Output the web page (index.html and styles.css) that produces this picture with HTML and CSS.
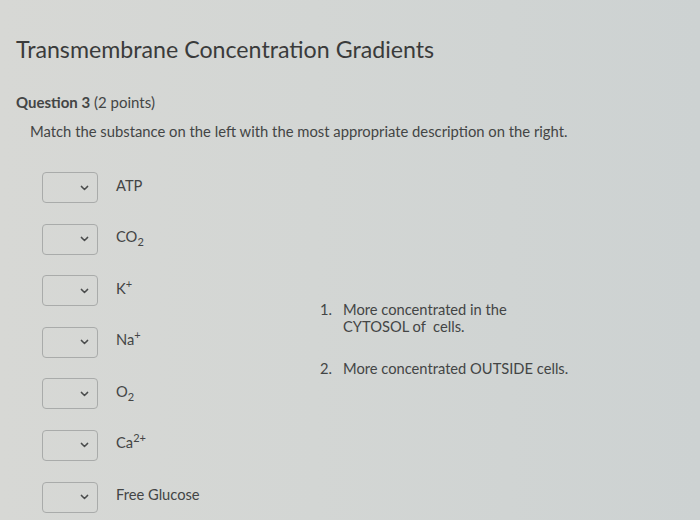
FILE: index.html
```html
<!DOCTYPE html>
<html lang="en">
<head>
<meta charset="utf-8">
<title>Transmembrane Concentration Gradients</title>
<link rel="stylesheet" href="styles.css">
</head>
<body>
<main class="page">
  <h1 class="title">Transmembrane Concentration Gradients</h1>
  <h2 class="q-head"><strong>Question 3</strong> (2 points)</h2>
  <p class="prompt">Match the substance on the left with the most appropriate description on the right.</p>

  <section class="match">
    <div class="choices">
      <div class="row">
        <button class="select" type="button" aria-label="Select answer"><svg class="chev" viewBox="0 0 10 6"><path d="M1.5 1.2 L5 4.6 L8.5 1.2"/></svg></button>
        <span class="label">ATP</span>
      </div>
      <div class="row">
        <button class="select" type="button" aria-label="Select answer"><svg class="chev" viewBox="0 0 10 6"><path d="M1.5 1.2 L5 4.6 L8.5 1.2"/></svg></button>
        <span class="label">CO<sub>2</sub></span>
      </div>
      <div class="row">
        <button class="select" type="button" aria-label="Select answer"><svg class="chev" viewBox="0 0 10 6"><path d="M1.5 1.2 L5 4.6 L8.5 1.2"/></svg></button>
        <span class="label">K<sup>+</sup></span>
      </div>
      <div class="row">
        <button class="select" type="button" aria-label="Select answer"><svg class="chev" viewBox="0 0 10 6"><path d="M1.5 1.2 L5 4.6 L8.5 1.2"/></svg></button>
        <span class="label">Na<sup>+</sup></span>
      </div>
      <div class="row">
        <button class="select" type="button" aria-label="Select answer"><svg class="chev" viewBox="0 0 10 6"><path d="M1.5 1.2 L5 4.6 L8.5 1.2"/></svg></button>
        <span class="label">O<sub>2</sub></span>
      </div>
      <div class="row">
        <button class="select" type="button" aria-label="Select answer"><svg class="chev" viewBox="0 0 10 6"><path d="M1.5 1.2 L5 4.6 L8.5 1.2"/></svg></button>
        <span class="label">Ca<sup>2+</sup></span>
      </div>
      <div class="row">
        <button class="select" type="button" aria-label="Select answer"><svg class="chev" viewBox="0 0 10 6"><path d="M1.5 1.2 L5 4.6 L8.5 1.2"/></svg></button>
        <span class="label">Free Glucose</span>
      </div>
    </div>

    <ol class="answers">
      <li><span class="num">1.</span><span>More concentrated in the<br>CYTOSOL of&nbsp; cells.</span></li>
      <li><span class="num">2.</span><span>More concentrated OUTSIDE cells.</span></li>
    </ol>
  </section>
</main>
</body>
</html>
```

FILE: styles.css
```css
* { box-sizing: border-box; }

html, body {
  margin: 0;
  height: 100%;
}

body {
  background: linear-gradient(90deg, #d7d8d5 0%, #d3d6d4 45%, #cdd2d2 100%);
  color: #434545;
  font-family: Lato, "Open Sans", sans-serif;
}

.page {
  padding: 36px 0 0 16px;
}

.title {
  margin: 0;
  font-size: 23.2px;
  font-weight: 400;
  line-height: 27px;
  color: #3a3b3b;
}

.q-head {
  margin: 30px 0 0;
  font-size: 15px;
  font-weight: 400;
  line-height: 18px;
}

.q-head strong { font-weight: 700; }

.prompt {
  margin: 11px 0 0 14px;
  font-size: 14.8px;
  line-height: 18px;
}

.match {
  display: grid;
  grid-template-columns: 278px auto;
  margin: 32px 0 0 26px;
}

.choices {
  display: flex;
  flex-direction: column;
  gap: 20.6px;
}

.row {
  display: flex;
  align-items: center;
  gap: 18px;
  height: 31px;
}

.select {
  display: flex;
  align-items: center;
  justify-content: flex-end;
  width: 56px;
  height: 31px;
  padding: 0 8px 0 0;
  border: 1.5px solid #a9abaa;
  border-radius: 4px;
  background: transparent;
}

.chev {
  width: 9px;
  height: 6px;
  fill: none;
  stroke: #4a4c4c;
  stroke-width: 1.6;
  stroke-linecap: round;
  stroke-linejoin: round;
}

.label {
  font-size: 14.7px;
  line-height: 18px;
  margin-top: -6px;
}

.label sub,
.label sup {
  font-size: 11px;
  line-height: 0;
}

.answers {
  align-self: center;
  list-style: none;
  margin: -6px 0 0;
  padding: 0;
  font-size: 14.7px;
  line-height: 17px;
}

.answers li {
  display: flex;
}

.answers .num {
  width: 23px;
  flex: none;
}

.answers li + li {
  margin-top: 25px;
}
```
